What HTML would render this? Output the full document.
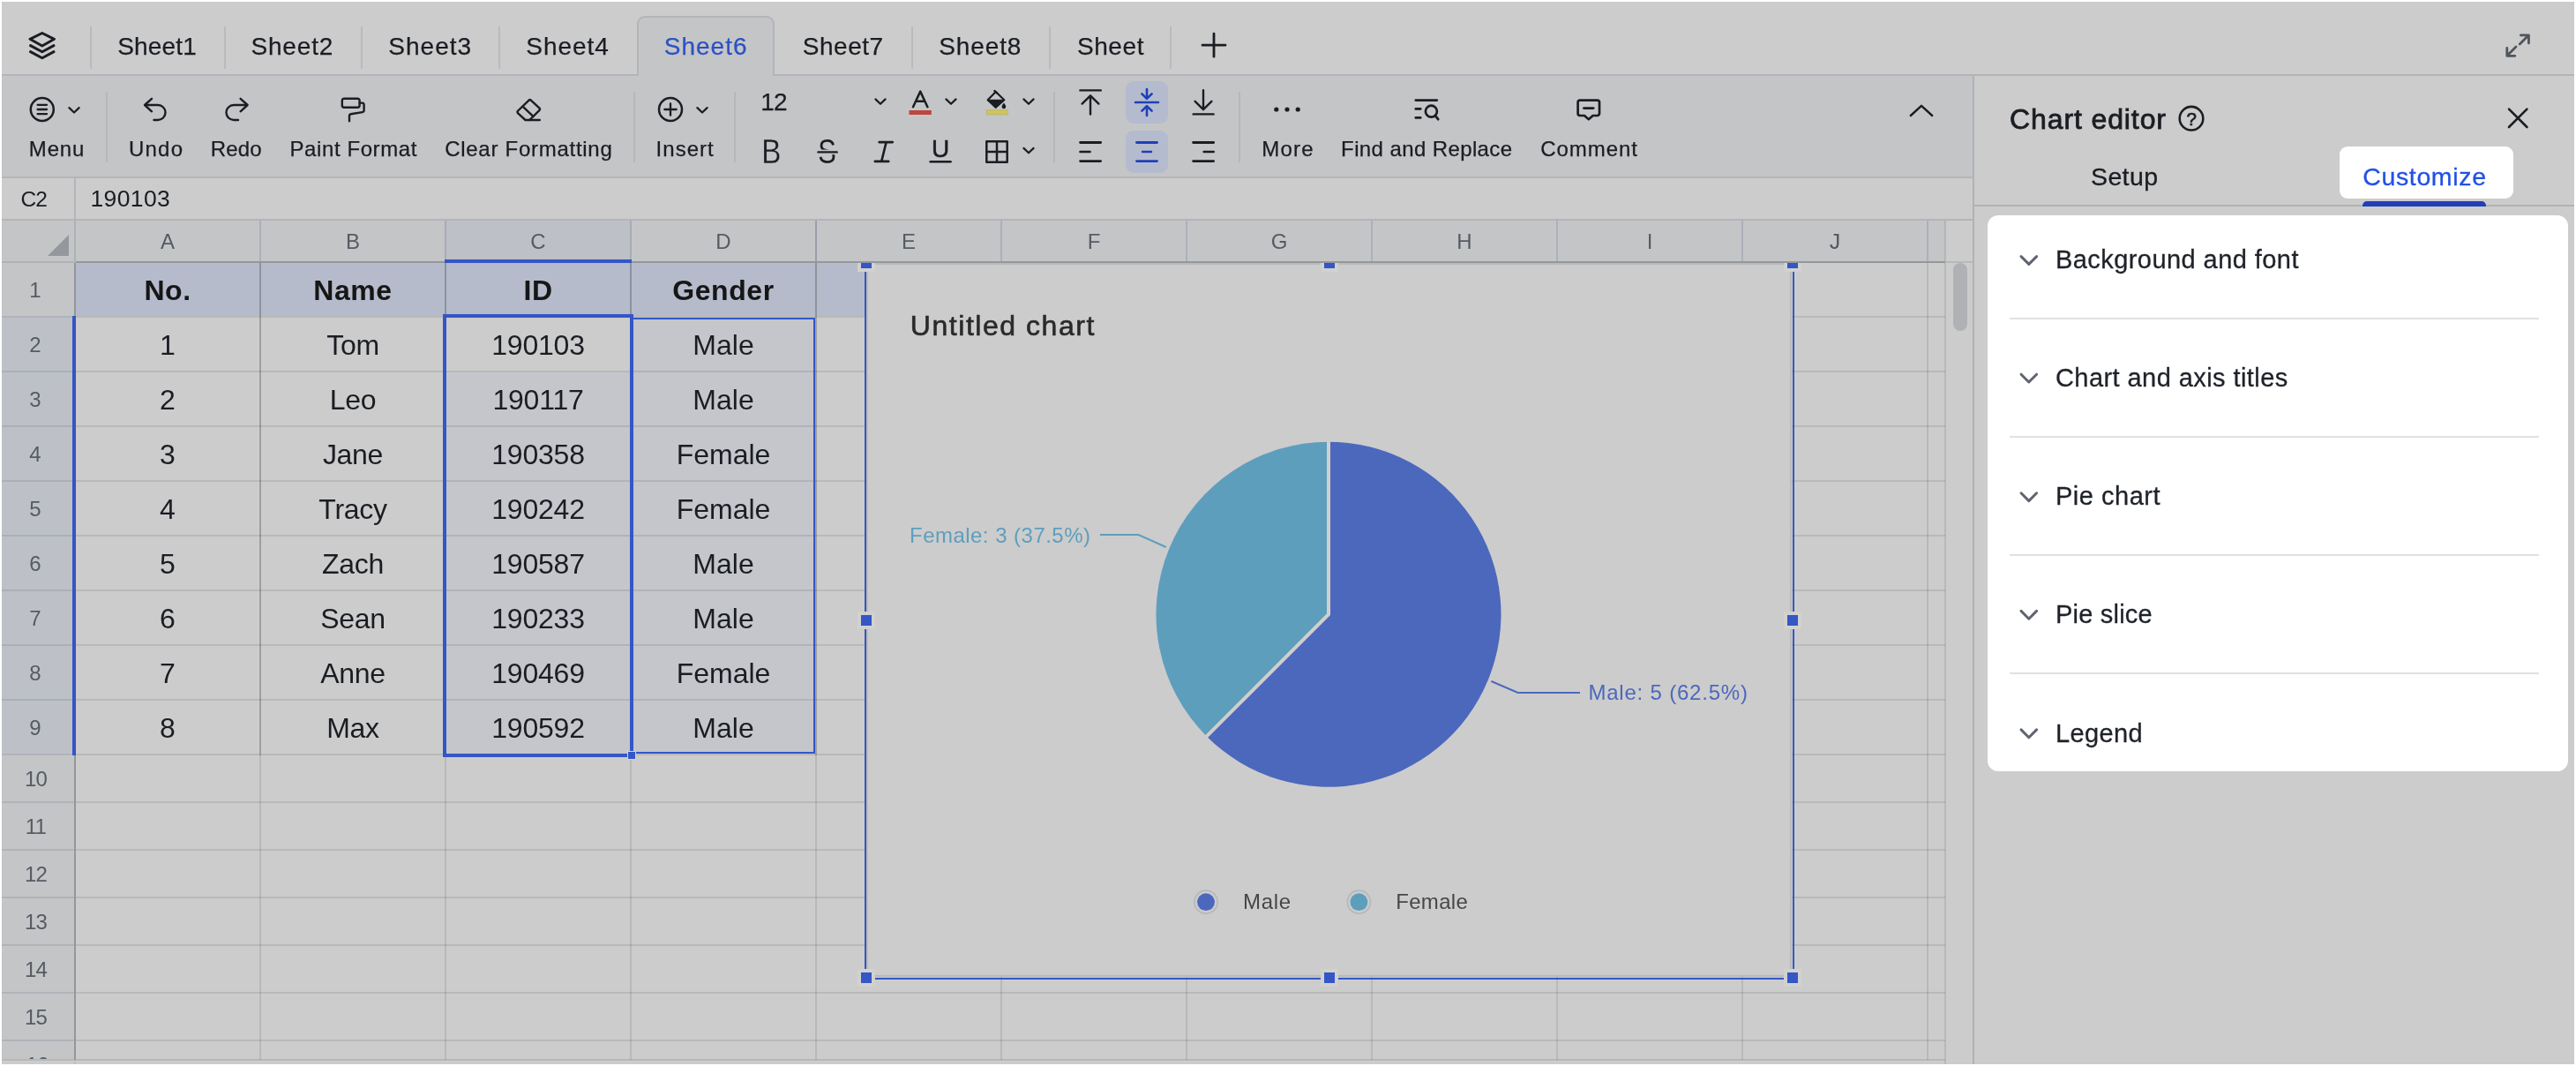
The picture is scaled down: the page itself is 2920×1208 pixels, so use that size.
<!DOCTYPE html>
<html><head><meta charset="utf-8"><title>Sheet</title>
<style>
html,body{margin:0;padding:0;background:#fff;}
body{width:2920px;height:1208px;overflow:hidden;position:relative;font-family:"Liberation Sans",sans-serif;color:#1a1d22;}
#bg{position:absolute;left:2px;top:2px;width:2916px;height:1204px;background:#cccccc;}
#app{position:absolute;left:2px;top:2px;width:2916px;height:1204px;overflow:hidden;will-change:transform;}
#app *{box-sizing:border-box;}
.a{position:absolute;}
.t{position:absolute;white-space:pre;line-height:1;}
.c{position:absolute;white-space:pre;line-height:1;text-align:center;}
svg{position:absolute;overflow:visible;}
.ic{fill:none;stroke:#1a1d22;stroke-width:2.4;stroke-linecap:round;stroke-linejoin:round;}
</style></head><body><div id="bg"></div><div id="app">
<div class="a" style="left:0px;top:82px;width:2916px;height:2px;background:#b4b5b9;"></div><div class="a" style="left:720px;top:16px;width:156px;height:70px;background:#c4c5c7;border:2px solid #b4b5b9;border-bottom:none;border-radius:9px 9px 0 0;"></div><div class="a" style="left:100px;top:28px;width:2px;height:48px;background:#b9babd;"></div><div class="a" style="left:251.5px;top:28px;width:2px;height:48px;background:#b9babd;"></div><div class="a" style="left:407px;top:28px;width:2px;height:48px;background:#b9babd;"></div><div class="a" style="left:563px;top:28px;width:2px;height:48px;background:#b9babd;"></div><div class="a" style="left:1031px;top:28px;width:2px;height:48px;background:#b9babd;"></div><div class="a" style="left:1187px;top:28px;width:2px;height:48px;background:#b9babd;"></div><div class="a" style="left:1324px;top:28px;width:2px;height:48px;background:#b9babd;"></div><div class="t" style="left:131.20px;top:37.30px;font-size:28px;color:#1a1d22;font-weight:400;letter-spacing:0.171px;-webkit-text-stroke-width:0.25px;">Sheet1</div><div class="t" style="left:282.50px;top:37.30px;font-size:28px;color:#1a1d22;font-weight:400;letter-spacing:0.811px;-webkit-text-stroke-width:0.25px;">Sheet2</div><div class="t" style="left:438.30px;top:37.30px;font-size:28px;color:#1a1d22;font-weight:400;letter-spacing:1.011px;-webkit-text-stroke-width:0.25px;">Sheet3</div><div class="t" style="left:594.30px;top:37.30px;font-size:28px;color:#1a1d22;font-weight:400;letter-spacing:0.951px;-webkit-text-stroke-width:0.25px;">Sheet4</div><div class="t" style="left:750.80px;top:37.30px;font-size:28px;color:#2c51c4;font-weight:400;letter-spacing:0.991px;-webkit-text-stroke-width:0.25px;">Sheet6</div><div class="t" style="left:907.70px;top:37.30px;font-size:28px;color:#1a1d22;font-weight:400;letter-spacing:0.551px;-webkit-text-stroke-width:0.25px;">Sheet7</div><div class="t" style="left:1062.30px;top:37.30px;font-size:28px;color:#1a1d22;font-weight:400;letter-spacing:0.871px;-webkit-text-stroke-width:0.25px;">Sheet8</div><div class="t" style="left:1218.90px;top:37.30px;font-size:28px;color:#1a1d22;font-weight:400;letter-spacing:0.606px;-webkit-text-stroke-width:0.25px;">Sheet</div><div class="a" style="left:0px;top:84px;width:2235px;height:114px;background:#c4c5c7;"></div><div class="a" style="left:0px;top:198px;width:2235px;height:2px;background:#b4b5b9;"></div><div class="a" style="left:118px;top:102px;width:2px;height:80px;background:#b6b7ba;"></div><div class="a" style="left:716px;top:102px;width:2px;height:80px;background:#b6b7ba;"></div><div class="a" style="left:830px;top:102px;width:2px;height:80px;background:#b6b7ba;"></div><div class="a" style="left:1192px;top:102px;width:2px;height:80px;background:#b6b7ba;"></div><div class="a" style="left:1402px;top:102px;width:2px;height:80px;background:#b6b7ba;"></div><div class="a" style="left:1274px;top:90px;width:48px;height:48px;background:#b4bbce;border-radius:9px;"></div><div class="a" style="left:1274px;top:146px;width:48px;height:48px;background:#b4bbce;border-radius:9px;"></div><div class="t" style="left:30.80px;top:154.68px;font-size:24px;color:#1a1d22;font-weight:400;letter-spacing:0.854px;-webkit-text-stroke-width:0.25px;">Menu</div><div class="t" style="left:144.00px;top:154.68px;font-size:24px;color:#1a1d22;font-weight:400;letter-spacing:1.208px;-webkit-text-stroke-width:0.25px;">Undo</div><div class="t" style="left:236.80px;top:154.68px;font-size:24px;color:#1a1d22;font-weight:400;letter-spacing:0.174px;-webkit-text-stroke-width:0.25px;">Redo</div><div class="t" style="left:326.50px;top:154.68px;font-size:24px;color:#1a1d22;font-weight:400;letter-spacing:0.592px;-webkit-text-stroke-width:0.25px;">Paint Format</div><div class="t" style="left:502.20px;top:154.68px;font-size:24px;color:#1a1d22;font-weight:400;letter-spacing:0.725px;-webkit-text-stroke-width:0.25px;">Clear Formatting</div><div class="t" style="left:741.60px;top:154.68px;font-size:24px;color:#1a1d22;font-weight:400;letter-spacing:1.035px;-webkit-text-stroke-width:0.25px;">Insert</div><div class="t" style="left:1428.20px;top:154.68px;font-size:24px;color:#1a1d22;font-weight:400;letter-spacing:1.206px;-webkit-text-stroke-width:0.25px;">More</div><div class="t" style="left:1518.10px;top:154.68px;font-size:24px;color:#1a1d22;font-weight:400;letter-spacing:0.392px;-webkit-text-stroke-width:0.25px;">Find and Replace</div><div class="t" style="left:1744.20px;top:154.68px;font-size:24px;color:#1a1d22;font-weight:400;letter-spacing:0.962px;-webkit-text-stroke-width:0.25px;">Comment</div><div class="t" style="left:860.20px;top:100.10px;font-size:28px;color:#1a1d22;font-weight:400;letter-spacing:-0.746px;-webkit-text-stroke-width:0.25px;">12</div><div class="a" style="left:0px;top:246px;width:2235px;height:2px;background:#b4b5b9;"></div><div class="a" style="left:82px;top:200px;width:2px;height:46px;background:#b4b5b9;"></div><div class="t" style="left:21.40px;top:212.26px;font-size:24.5px;color:#1a1d22;font-weight:400;letter-spacing:-0.92px;">C2</div><div class="t" style="left:100.40px;top:210.17px;font-size:26.5px;color:#1a1d22;font-weight:400;letter-spacing:0.394px;">190103</div><svg style="left:0;top:0" width="2916" height="1204" viewBox="2 2 2916 1204"><path d="M47.8,37.5 L61.5,44.3 L47.8,52 L34,44.3 Z" fill="none" stroke="#1a1d22" stroke-width="3.0" stroke-linecap="round" stroke-linejoin="round" stroke-linejoin="miter"/><path d="M34.5,51.6 L47.8,58.8 L61,51.6" fill="none" stroke="#1a1d22" stroke-width="3.0" stroke-linecap="round" stroke-linejoin="round" stroke-linecap="butt" stroke-linejoin="miter"/><path d="M34.5,58.6 L47.8,65.8 L61,58.6" fill="none" stroke="#1a1d22" stroke-width="3.0" stroke-linecap="round" stroke-linejoin="round" stroke-linecap="butt" stroke-linejoin="miter"/><path d="M1363,51.2 H1389 M1376,38.2 V64.2" fill="none" stroke="#1a1d22" stroke-width="2.8" stroke-linecap="round" stroke-linejoin="round" stroke-linecap="butt"/><path d="M2857.4,39.9 H2866.4 V48.9 M2866.2,40.1 L2856.2,50.1" fill="none" stroke="#50555c" stroke-width="2.8" stroke-linecap="round" stroke-linejoin="round" /><path d="M2850.8,63.3 H2841.8 V54.3 M2842,63.1 L2852,53.1" fill="none" stroke="#50555c" stroke-width="2.8" stroke-linecap="round" stroke-linejoin="round" /><circle cx="47.8" cy="124" r="13" fill="none" stroke="#1a1d22" stroke-width="2.5"/><path d="M42.6,118.8 H53 M42.6,124 H53 M42.6,129.2 H53" fill="none" stroke="#1a1d22" stroke-width="2.3" stroke-linecap="round" stroke-linejoin="round" /><path d="M78.4,122.1 L84,127.5 L89.6,122.1" fill="none" stroke="#1a1d22" stroke-width="2.2" stroke-linecap="round" stroke-linejoin="round" /><path d="M172,111.8 L164,119 L172,126.3" fill="none" stroke="#1a1d22" stroke-width="2.4" stroke-linecap="round" stroke-linejoin="round" /><path d="M165,119 H179 a8.5,8.5 0 0 1 0,17 H174.5" fill="none" stroke="#1a1d22" stroke-width="2.4" stroke-linecap="round" stroke-linejoin="round" /><path d="M272.6,111.8 L280.6,119 L272.6,126.3" fill="none" stroke="#1a1d22" stroke-width="2.4" stroke-linecap="round" stroke-linejoin="round" /><path d="M279.6,119 H265 a8.5,8.5 0 0 0 0,17 H270" fill="none" stroke="#1a1d22" stroke-width="2.4" stroke-linecap="round" stroke-linejoin="round" /><path d="M390,111.8 H405.4 a2.2,2.2 0 0 1 2.2,2.2 V119.5 a2.2,2.2 0 0 1 -2.2,2.2 H390 a2.2,2.2 0 0 1 -2.2,-2.2 V114 a2.2,2.2 0 0 1 2.2,-2.2 Z" fill="none" stroke="#1a1d22" stroke-width="2.4" stroke-linecap="round" stroke-linejoin="round" /><path d="M407.6,116.6 H410.4 a2.2,2.2 0 0 1 2.2,2.2 V125 a2.2,2.2 0 0 1 -1.8,2.1 L397.8,129.3 a2.2,2.2 0 0 0 -1.8,2.1 V137.3" fill="none" stroke="#1a1d22" stroke-width="2.4" stroke-linecap="round" stroke-linejoin="round" stroke-linecap="butt"/><path d="M599.3,113.8 a2,2 0 0 1 2.8,0 L611.3,122.3 a2,2 0 0 1 0,2.8 L600.3,136 H595.5 L587.2,128.3 a2,2 0 0 1 0,-2.8 Z" fill="none" stroke="#1a1d22" stroke-width="2.4" stroke-linecap="round" stroke-linejoin="round" /><path d="M592.5,120.6 L604.4,131.9" fill="none" stroke="#1a1d22" stroke-width="2.4" stroke-linecap="round" stroke-linejoin="round" /><path d="M600,136 H611.8" fill="none" stroke="#1a1d22" stroke-width="2.4" stroke-linecap="round" stroke-linejoin="round" /><circle cx="760" cy="124" r="13" fill="none" stroke="#1a1d22" stroke-width="2.5"/><path d="M753.3,124 H766.7 M760,117.3 V130.7" fill="none" stroke="#1a1d22" stroke-width="2.3" stroke-linecap="round" stroke-linejoin="round" /><path d="M790.4,122.1 L796,127.5 L801.6,122.1" fill="none" stroke="#1a1d22" stroke-width="2.2" stroke-linecap="round" stroke-linejoin="round" /><path d="M992.4,112.39999999999999 L998,117.8 L1003.6,112.39999999999999" fill="none" stroke="#1a1d22" stroke-width="2.2" stroke-linecap="round" stroke-linejoin="round" /><path d="M1035,121.2 L1043.2,103.6 L1051.4,121.2 M1038.8,114.7 H1047.6" fill="none" stroke="#1a1d22" stroke-width="2.5" stroke-linecap="round" stroke-linejoin="round" /><rect x="1030.5" y="125" width="25.3" height="5" fill="#bd463e"/><path d="M1072.4,112.39999999999999 L1078,117.8 L1083.6,112.39999999999999" fill="none" stroke="#1a1d22" stroke-width="2.2" stroke-linecap="round" stroke-linejoin="round" /><path d="M1128.7,104 L1138.3,113.2 L1128.7,121.8 L1119.7,113.2 Z" fill="none" stroke="#1a1d22" stroke-width="2.2" stroke-linejoin="round"/><path d="M1120.4,113.6 H1137.6 L1128.7,121.6 Z" fill="#1a1d22" stroke="#1a1d22" stroke-width="1.6" stroke-linejoin="round"/><path d="M1127.3,102.9 L1130.3,105.6" fill="none" stroke="#1a1d22" stroke-width="2.3" stroke-linecap="round" stroke-linejoin="round" /><path d="M1137.9,116.6 c1.6,2.2 2.3,3.3 2.3,4.4 a2.3,2.3 0 0 1 -4.6,0 c0,-1.1 0.7,-2.2 2.3,-4.4 Z" fill="#1a1d22"/><rect x="1118.3" y="124.8" width="24" height="5" fill="#cfc55c" stroke="#bcb35a" stroke-width="0.8"/><path d="M1160.4,112.39999999999999 L1166,117.8 L1171.6,112.39999999999999" fill="none" stroke="#1a1d22" stroke-width="2.2" stroke-linecap="round" stroke-linejoin="round" /><path d="M1118.3,160.3 H1141.7 V183.7 H1118.3 Z M1130,160.3 V183.7 M1118.3,172 H1141.7" fill="none" stroke="#1a1d22" stroke-width="2.5" stroke-linecap="round" stroke-linejoin="round" stroke-linejoin="miter"/><path d="M1160.4,167.9 L1166,173.29999999999998 L1171.6,167.9" fill="none" stroke="#1a1d22" stroke-width="2.2" stroke-linecap="round" stroke-linejoin="round" /><path d="M1224.4,102.4 H1247.8 M1236,129.6 V109 M1226.6,117.6 L1236,108.3 L1245.4,117.6" fill="none" stroke="#1a1d22" stroke-width="2.4" stroke-linecap="round" stroke-linejoin="round" /><path d="M1287,116 H1313 M1300,101 V111.4 M1294.4,106.4 L1300,111.9 L1305.6,106.4 M1300,131 V120.6 M1294.4,125.6 L1300,120.1 L1305.6,125.6" fill="none" stroke="#2040b8" stroke-width="2.6" stroke-linecap="round" stroke-linejoin="round" /><path d="M1352.6,129.4 H1375.6 M1364,102.2 V123.5 M1354.6,114.8 L1364,124.2 L1373.4,114.8" fill="none" stroke="#1a1d22" stroke-width="2.4" stroke-linecap="round" stroke-linejoin="round" /><path d="M1224.6,161.5 H1247.6 M1224.6,182.6 H1247.6" fill="none" stroke="#1a1d22" stroke-width="2.9" stroke-linecap="round" stroke-linejoin="round" /><path d="M1224.4,172 H1235.6" fill="none" stroke="#1a1d22" stroke-width="2.4" stroke-linecap="round" stroke-linejoin="round" /><path d="M1288.5,161.5 H1311.5 M1288.5,182.6 H1311.5" fill="none" stroke="#2040b8" stroke-width="2.9" stroke-linecap="round" stroke-linejoin="round" /><path d="M1295,172 H1305" fill="none" stroke="#2040b8" stroke-width="2.4" stroke-linecap="round" stroke-linejoin="round" /><path d="M1352.6,161.5 H1375.6 M1352.6,182.6 H1375.6" fill="none" stroke="#1a1d22" stroke-width="2.9" stroke-linecap="round" stroke-linejoin="round" /><path d="M1364.6,172 H1375.8" fill="none" stroke="#1a1d22" stroke-width="2.4" stroke-linecap="round" stroke-linejoin="round" /><path d="M996.6,161.1 H1011.8 M991.8,182.9 H1007.2 M1004.6,161.1 L999.2,182.9" fill="none" stroke="#1a1d22" stroke-width="2.6" stroke-linecap="round" stroke-linejoin="round" stroke-linecap="butt"/><path d="M1054.6,183.3 H1077.6" fill="none" stroke="#1a1d22" stroke-width="2.5" stroke-linecap="round" stroke-linejoin="round" /><circle cx="1446.8" cy="124" r="2.6" fill="#1a1d22"/><circle cx="1459" cy="124" r="2.6" fill="#1a1d22"/><circle cx="1471.2" cy="124" r="2.6" fill="#1a1d22"/><path d="M1604.8,113.6 H1628.8 M1604.8,123.4 H1610.2 M1604.8,133.4 H1610.2" fill="none" stroke="#1a1d22" stroke-width="2.8" stroke-linecap="round" stroke-linejoin="round" /><circle cx="1622.4" cy="126.2" r="6.5" fill="none" stroke="#1a1d22" stroke-width="2.7"/><path d="M1627.2,131.4 L1630.2,135.2" fill="none" stroke="#1a1d22" stroke-width="2.8" stroke-linecap="round" stroke-linejoin="round" /><path d="M1791,113.7 H1810.6 a2.4,2.4 0 0 1 2.4,2.4 V128.6 a2.4,2.4 0 0 1 -2.4,2.4 H1805.6 L1800.8,135.2 L1796,131 H1791 a2.4,2.4 0 0 1 -2.4,-2.4 V116.1 a2.4,2.4 0 0 1 2.4,-2.4 Z" fill="none" stroke="#1a1d22" stroke-width="2.7" stroke-linecap="round" stroke-linejoin="round" /><path d="M1795.4,122.6 H1806.2" fill="none" stroke="#1a1d22" stroke-width="2.7" stroke-linecap="round" stroke-linejoin="round" /><path d="M2165.8,131 L2178,119.8 L2190.2,131" fill="none" stroke="#1a1d22" stroke-width="2.4" stroke-linecap="round" stroke-linejoin="round" /><text transform="translate(874.3,185) scale(0.86,1)" font-size="38.6" text-anchor="middle" fill="#1a1d22" stroke="#c4c5c7" stroke-width="0.3" font-family="Liberation Sans, sans-serif">B</text><text transform="translate(937.6,184.7) scale(0.8,1)" font-size="38.6" text-anchor="middle" fill="#1a1d22" font-family="Liberation Sans, sans-serif">S</text><rect x="925" y="169.6" width="26" height="5.6" fill="#c4c5c7"/><path d="M927.5,172.4 H948.7" fill="none" stroke="#1a1d22" stroke-width="2.4" stroke-linecap="round" stroke-linejoin="round" /><text x="1066" y="177.9" font-size="28" text-anchor="middle" fill="#1a1d22" stroke="#1a1d22" stroke-width="0.5" font-family="Liberation Sans, sans-serif">U</text></svg><div class="a" style="left:0px;top:248px;width:2203px;height:47px;background:#c4c5c7;"></div><div class="a" style="left:502px;top:248px;width:212px;height:47px;background:#bdc0c7;"></div><div class="a" style="left:0px;top:296px;width:82px;height:903px;background:#c4c5c7;"></div><div class="a" style="left:0px;top:358px;width:82px;height:494px;background:#bdc0c7;"></div><div class="a" style="left:84px;top:296px;width:894px;height:60px;background:#b5bbcb;"></div><div class="a" style="left:504px;top:420px;width:208px;height:432px;background:#c5c6cc;"></div><div class="a" style="left:716px;top:358px;width:206px;height:494px;background:#c5c6cc;"></div><div class="a" style="left:84px;top:356px;width:2119px;height:2px;background:rgba(10,16,16,0.102);"></div><div class="a" style="left:0px;top:356px;width:82px;height:2px;background:rgba(50,60,95,0.13);"></div><div class="a" style="left:84px;top:418px;width:2119px;height:2px;background:rgba(10,16,16,0.102);"></div><div class="a" style="left:0px;top:418px;width:82px;height:2px;background:rgba(50,60,95,0.13);"></div><div class="a" style="left:84px;top:480px;width:2119px;height:2px;background:rgba(10,16,16,0.102);"></div><div class="a" style="left:0px;top:480px;width:82px;height:2px;background:rgba(50,60,95,0.13);"></div><div class="a" style="left:84px;top:542px;width:2119px;height:2px;background:rgba(10,16,16,0.102);"></div><div class="a" style="left:0px;top:542px;width:82px;height:2px;background:rgba(50,60,95,0.13);"></div><div class="a" style="left:84px;top:604px;width:2119px;height:2px;background:rgba(10,16,16,0.102);"></div><div class="a" style="left:0px;top:604px;width:82px;height:2px;background:rgba(50,60,95,0.13);"></div><div class="a" style="left:84px;top:666px;width:2119px;height:2px;background:rgba(10,16,16,0.102);"></div><div class="a" style="left:0px;top:666px;width:82px;height:2px;background:rgba(50,60,95,0.13);"></div><div class="a" style="left:84px;top:728px;width:2119px;height:2px;background:rgba(10,16,16,0.102);"></div><div class="a" style="left:0px;top:728px;width:82px;height:2px;background:rgba(50,60,95,0.13);"></div><div class="a" style="left:84px;top:790px;width:2119px;height:2px;background:rgba(10,16,16,0.102);"></div><div class="a" style="left:0px;top:790px;width:82px;height:2px;background:rgba(50,60,95,0.13);"></div><div class="a" style="left:84px;top:852px;width:2119px;height:2px;background:rgba(10,16,16,0.102);"></div><div class="a" style="left:0px;top:852px;width:82px;height:2px;background:rgba(50,60,95,0.13);"></div><div class="a" style="left:84px;top:906px;width:2119px;height:2px;background:rgba(10,16,16,0.102);"></div><div class="a" style="left:0px;top:906px;width:82px;height:2px;background:rgba(50,60,95,0.13);"></div><div class="a" style="left:84px;top:960px;width:2119px;height:2px;background:rgba(10,16,16,0.102);"></div><div class="a" style="left:0px;top:960px;width:82px;height:2px;background:rgba(50,60,95,0.13);"></div><div class="a" style="left:84px;top:1014px;width:2119px;height:2px;background:rgba(10,16,16,0.102);"></div><div class="a" style="left:0px;top:1014px;width:82px;height:2px;background:rgba(50,60,95,0.13);"></div><div class="a" style="left:84px;top:1068px;width:2119px;height:2px;background:rgba(10,16,16,0.102);"></div><div class="a" style="left:0px;top:1068px;width:82px;height:2px;background:rgba(50,60,95,0.13);"></div><div class="a" style="left:84px;top:1122px;width:2119px;height:2px;background:rgba(10,16,16,0.102);"></div><div class="a" style="left:0px;top:1122px;width:82px;height:2px;background:rgba(50,60,95,0.13);"></div><div class="a" style="left:84px;top:1176px;width:2119px;height:2px;background:rgba(10,16,16,0.102);"></div><div class="a" style="left:0px;top:1176px;width:82px;height:2px;background:rgba(50,60,95,0.13);"></div><div class="a" style="left:0px;top:1198px;width:2203px;height:2px;background:#b6b8ba;"></div><div class="a" style="left:0px;top:1200px;width:2203px;height:4px;background:#cccccc;"></div><div class="a" style="left:82px;top:1200px;width:2px;height:4px;background:#c0c1c3;"></div><div class="a" style="left:292px;top:296px;width:2px;height:903px;background:rgba(10,16,16,0.102);"></div><div class="a" style="left:292px;top:248px;width:2px;height:46px;background:rgba(50,60,100,0.15);"></div><div class="a" style="left:502px;top:296px;width:2px;height:903px;background:rgba(10,16,16,0.102);"></div><div class="a" style="left:502px;top:248px;width:2px;height:46px;background:rgba(50,60,100,0.15);"></div><div class="a" style="left:712px;top:296px;width:2px;height:903px;background:rgba(10,16,16,0.102);"></div><div class="a" style="left:712px;top:248px;width:2px;height:46px;background:rgba(50,60,100,0.15);"></div><div class="a" style="left:922px;top:296px;width:2px;height:903px;background:rgba(10,16,16,0.102);"></div><div class="a" style="left:922px;top:248px;width:2px;height:46px;background:rgba(50,60,100,0.15);"></div><div class="a" style="left:1132px;top:296px;width:2px;height:903px;background:rgba(10,16,16,0.102);"></div><div class="a" style="left:1132px;top:248px;width:2px;height:46px;background:rgba(50,60,100,0.15);"></div><div class="a" style="left:1342px;top:296px;width:2px;height:903px;background:rgba(10,16,16,0.102);"></div><div class="a" style="left:1342px;top:248px;width:2px;height:46px;background:rgba(50,60,100,0.15);"></div><div class="a" style="left:1552px;top:296px;width:2px;height:903px;background:rgba(10,16,16,0.102);"></div><div class="a" style="left:1552px;top:248px;width:2px;height:46px;background:rgba(50,60,100,0.15);"></div><div class="a" style="left:1762px;top:296px;width:2px;height:903px;background:rgba(10,16,16,0.102);"></div><div class="a" style="left:1762px;top:248px;width:2px;height:46px;background:rgba(50,60,100,0.15);"></div><div class="a" style="left:1972px;top:296px;width:2px;height:903px;background:rgba(10,16,16,0.102);"></div><div class="a" style="left:1972px;top:248px;width:2px;height:46px;background:rgba(50,60,100,0.15);"></div><div class="a" style="left:2182px;top:296px;width:2px;height:903px;background:rgba(10,16,16,0.102);"></div><div class="a" style="left:2182px;top:248px;width:2px;height:46px;background:rgba(50,60,100,0.15);"></div><div class="a" style="left:2202px;top:248px;width:2px;height:956px;background:rgba(10,16,16,0.102);"></div><div class="a" style="left:292px;top:296px;width:2px;height:558px;background:rgba(10,20,10,0.15);"></div><div class="a" style="left:502px;top:296px;width:2px;height:558px;background:rgba(10,20,10,0.15);"></div><div class="a" style="left:712px;top:296px;width:2px;height:558px;background:rgba(10,20,10,0.15);"></div><div class="a" style="left:922px;top:296px;width:2px;height:558px;background:rgba(10,20,10,0.15);"></div><div class="a" style="left:84px;top:294px;width:2119px;height:2px;background:#94989b;"></div><div class="a" style="left:0px;top:294px;width:84px;height:2px;background:#b0b2b6;"></div><div class="a" style="left:82px;top:296px;width:2px;height:903px;background:#93979b;"></div><div class="a" style="left:82px;top:248px;width:2px;height:46px;background:rgba(50,60,100,0.15);"></div><div class="a" style="left:502px;top:292px;width:212px;height:4px;background:#3456c6;"></div><div class="a" style="left:80px;top:356px;width:4px;height:498px;background:#3456c6;"></div><svg style="left:0;top:0" width="100" height="300" viewBox="2 2 100 300"><path d="M78,266 V290 H54 Z" fill="#94989c"/></svg><div class="c" style="left:-12.00px;width:400px;top:259.68px;font-size:24px;color:#565b63;font-weight:400;letter-spacing:0px;">A</div><div class="c" style="left:198.00px;width:400px;top:259.68px;font-size:24px;color:#565b63;font-weight:400;letter-spacing:0px;">B</div><div class="c" style="left:408.00px;width:400px;top:259.68px;font-size:24px;color:#565b63;font-weight:400;letter-spacing:0px;">C</div><div class="c" style="left:618.00px;width:400px;top:259.68px;font-size:24px;color:#565b63;font-weight:400;letter-spacing:0px;">D</div><div class="c" style="left:828.00px;width:400px;top:259.68px;font-size:24px;color:#565b63;font-weight:400;letter-spacing:0px;">E</div><div class="c" style="left:1038.00px;width:400px;top:259.68px;font-size:24px;color:#565b63;font-weight:400;letter-spacing:0px;">F</div><div class="c" style="left:1248.00px;width:400px;top:259.68px;font-size:24px;color:#565b63;font-weight:400;letter-spacing:0px;">G</div><div class="c" style="left:1458.00px;width:400px;top:259.68px;font-size:24px;color:#565b63;font-weight:400;letter-spacing:0px;">H</div><div class="c" style="left:1668.00px;width:400px;top:259.68px;font-size:24px;color:#565b63;font-weight:400;letter-spacing:0px;">I</div><div class="c" style="left:1878.00px;width:400px;top:259.68px;font-size:24px;color:#565b63;font-weight:400;letter-spacing:0px;">J</div><div class="c" style="left:-2.20px;width:80px;top:315.08px;font-size:24px;color:#565b63;font-weight:400;letter-spacing:0px;">1</div><div class="c" style="left:-2.20px;width:80px;top:377.08px;font-size:24px;color:#565b63;font-weight:400;letter-spacing:0px;">2</div><div class="c" style="left:-2.20px;width:80px;top:439.08px;font-size:24px;color:#565b63;font-weight:400;letter-spacing:0px;">3</div><div class="c" style="left:-2.20px;width:80px;top:501.08px;font-size:24px;color:#565b63;font-weight:400;letter-spacing:0px;">4</div><div class="c" style="left:-2.20px;width:80px;top:563.08px;font-size:24px;color:#565b63;font-weight:400;letter-spacing:0px;">5</div><div class="c" style="left:-2.20px;width:80px;top:625.08px;font-size:24px;color:#565b63;font-weight:400;letter-spacing:0px;">6</div><div class="c" style="left:-2.20px;width:80px;top:687.08px;font-size:24px;color:#565b63;font-weight:400;letter-spacing:0px;">7</div><div class="c" style="left:-2.20px;width:80px;top:749.08px;font-size:24px;color:#565b63;font-weight:400;letter-spacing:0px;">8</div><div class="c" style="left:-2.20px;width:80px;top:811.08px;font-size:24px;color:#565b63;font-weight:400;letter-spacing:0px;">9</div><div class="c" style="left:-1.60px;width:80px;top:869.18px;font-size:24px;color:#565b63;font-weight:400;letter-spacing:-0.9px;">10</div><div class="c" style="left:-1.60px;width:80px;top:923.18px;font-size:24px;color:#565b63;font-weight:400;letter-spacing:-0.9px;">11</div><div class="c" style="left:-1.60px;width:80px;top:977.18px;font-size:24px;color:#565b63;font-weight:400;letter-spacing:-0.9px;">12</div><div class="c" style="left:-1.60px;width:80px;top:1031.18px;font-size:24px;color:#565b63;font-weight:400;letter-spacing:-0.9px;">13</div><div class="c" style="left:-1.60px;width:80px;top:1085.18px;font-size:24px;color:#565b63;font-weight:400;letter-spacing:-0.9px;">14</div><div class="c" style="left:-1.60px;width:80px;top:1139.18px;font-size:24px;color:#565b63;font-weight:400;letter-spacing:-0.9px;">15</div><div class="a" style="left:0;top:1178px;width:82px;height:20px;overflow:hidden"><div class="c" style="left:0;width:80px;top:15.18px;font-size:24px;letter-spacing:-0.9px;color:#565b63">16</div></div><div class="c" style="left:-12.00px;width:400px;top:311.31px;font-size:32px;color:#161616;font-weight:700;letter-spacing:0.55px;">No.</div><div class="c" style="left:198.00px;width:400px;top:311.31px;font-size:32px;color:#161616;font-weight:700;letter-spacing:0.55px;">Name</div><div class="c" style="left:408.00px;width:400px;top:311.31px;font-size:32px;color:#161616;font-weight:700;letter-spacing:0.55px;">ID</div><div class="c" style="left:618.00px;width:400px;top:311.31px;font-size:32px;color:#161616;font-weight:700;letter-spacing:0.55px;">Gender</div><div class="c" style="left:-12.00px;width:400px;top:372.61px;font-size:32px;color:#1a1d22;font-weight:400;letter-spacing:0px;">1</div><div class="c" style="left:198.00px;width:400px;top:372.61px;font-size:32px;color:#1a1d22;font-weight:400;letter-spacing:-0.3px;">Tom</div><div class="c" style="left:408.00px;width:400px;top:372.61px;font-size:32px;color:#1a1d22;font-weight:400;letter-spacing:-0.2px;">190103</div><div class="c" style="left:618.00px;width:400px;top:372.61px;font-size:32px;color:#1a1d22;font-weight:400;letter-spacing:0px;">Male</div><div class="c" style="left:-12.00px;width:400px;top:434.61px;font-size:32px;color:#1a1d22;font-weight:400;letter-spacing:0px;">2</div><div class="c" style="left:198.00px;width:400px;top:434.61px;font-size:32px;color:#1a1d22;font-weight:400;letter-spacing:-0.3px;">Leo</div><div class="c" style="left:408.00px;width:400px;top:434.61px;font-size:32px;color:#1a1d22;font-weight:400;letter-spacing:-0.2px;">190117</div><div class="c" style="left:618.00px;width:400px;top:434.61px;font-size:32px;color:#1a1d22;font-weight:400;letter-spacing:0px;">Male</div><div class="c" style="left:-12.00px;width:400px;top:496.61px;font-size:32px;color:#1a1d22;font-weight:400;letter-spacing:0px;">3</div><div class="c" style="left:198.00px;width:400px;top:496.61px;font-size:32px;color:#1a1d22;font-weight:400;letter-spacing:-0.3px;">Jane</div><div class="c" style="left:408.00px;width:400px;top:496.61px;font-size:32px;color:#1a1d22;font-weight:400;letter-spacing:-0.2px;">190358</div><div class="c" style="left:618.00px;width:400px;top:496.61px;font-size:32px;color:#1a1d22;font-weight:400;letter-spacing:0px;">Female</div><div class="c" style="left:-12.00px;width:400px;top:558.61px;font-size:32px;color:#1a1d22;font-weight:400;letter-spacing:0px;">4</div><div class="c" style="left:198.00px;width:400px;top:558.61px;font-size:32px;color:#1a1d22;font-weight:400;letter-spacing:-0.3px;">Tracy</div><div class="c" style="left:408.00px;width:400px;top:558.61px;font-size:32px;color:#1a1d22;font-weight:400;letter-spacing:-0.2px;">190242</div><div class="c" style="left:618.00px;width:400px;top:558.61px;font-size:32px;color:#1a1d22;font-weight:400;letter-spacing:0px;">Female</div><div class="c" style="left:-12.00px;width:400px;top:620.61px;font-size:32px;color:#1a1d22;font-weight:400;letter-spacing:0px;">5</div><div class="c" style="left:198.00px;width:400px;top:620.61px;font-size:32px;color:#1a1d22;font-weight:400;letter-spacing:-0.3px;">Zach</div><div class="c" style="left:408.00px;width:400px;top:620.61px;font-size:32px;color:#1a1d22;font-weight:400;letter-spacing:-0.2px;">190587</div><div class="c" style="left:618.00px;width:400px;top:620.61px;font-size:32px;color:#1a1d22;font-weight:400;letter-spacing:0px;">Male</div><div class="c" style="left:-12.00px;width:400px;top:682.61px;font-size:32px;color:#1a1d22;font-weight:400;letter-spacing:0px;">6</div><div class="c" style="left:198.00px;width:400px;top:682.61px;font-size:32px;color:#1a1d22;font-weight:400;letter-spacing:-0.3px;">Sean</div><div class="c" style="left:408.00px;width:400px;top:682.61px;font-size:32px;color:#1a1d22;font-weight:400;letter-spacing:-0.2px;">190233</div><div class="c" style="left:618.00px;width:400px;top:682.61px;font-size:32px;color:#1a1d22;font-weight:400;letter-spacing:0px;">Male</div><div class="c" style="left:-12.00px;width:400px;top:744.61px;font-size:32px;color:#1a1d22;font-weight:400;letter-spacing:0px;">7</div><div class="c" style="left:198.00px;width:400px;top:744.61px;font-size:32px;color:#1a1d22;font-weight:400;letter-spacing:-0.3px;">Anne</div><div class="c" style="left:408.00px;width:400px;top:744.61px;font-size:32px;color:#1a1d22;font-weight:400;letter-spacing:-0.2px;">190469</div><div class="c" style="left:618.00px;width:400px;top:744.61px;font-size:32px;color:#1a1d22;font-weight:400;letter-spacing:0px;">Female</div><div class="c" style="left:-12.00px;width:400px;top:806.61px;font-size:32px;color:#1a1d22;font-weight:400;letter-spacing:0px;">8</div><div class="c" style="left:198.00px;width:400px;top:806.61px;font-size:32px;color:#1a1d22;font-weight:400;letter-spacing:-0.3px;">Max</div><div class="c" style="left:408.00px;width:400px;top:806.61px;font-size:32px;color:#1a1d22;font-weight:400;letter-spacing:-0.2px;">190592</div><div class="c" style="left:618.00px;width:400px;top:806.61px;font-size:32px;color:#1a1d22;font-weight:400;letter-spacing:0px;">Male</div><div class="a" style="left:714px;top:358px;width:208px;height:494px;border:2px solid #3456c6;"></div><div class="a" style="left:500px;top:354px;width:216px;height:502px;border:4px solid #3456c6;"></div><div class="a" style="left:709px;top:849px;width:10px;height:10px;background:#3456c6;border:1px solid #d4d4d4;"></div><div class="a" style="left:2204px;top:294px;width:30px;height:2px;background:rgba(10,16,16,0.102);"></div><div class="a" style="left:2212px;top:296px;width:16px;height:76.5px;background:#b0b1b5;border-radius:8px;"></div><div class="a" style="left:980px;top:296px;width:1049px;height:809px;background:#cccccc;border:2px solid #b9babb;"></div><div class="a" style="left:978px;top:296px;width:1054px;height:812px;border:2px solid #3456c6;border-top-color:transparent;"></div><svg style="left:0;top:0" width="2916" height="1204" viewBox="2 2 2916 1204"><path d="M1506,696.2 L1506.00,500.70 A195.5,195.5 0 1 1 1367.76,834.44 Z" fill="#4c68bd"/><path d="M1506,696.2 L1367.76,834.44 A195.5,195.5 0 0 1 1506.00,500.70 Z" fill="#5e9ebd"/><path d="M1506.00,499.70 L1506,696.2 L1367.06,835.14" fill="none" stroke="#d0cfcd" stroke-width="4" stroke-linejoin="miter"/><path d="M1321.8,620 L1290.5,606 H1247" fill="none" stroke="#5e9ebd" stroke-width="2"/><path d="M1690.4,772 L1720.6,785 H1791" fill="none" stroke="#4c68bd" stroke-width="2"/><circle cx="1367" cy="1022.2" r="13.1" fill="none" stroke="#b5b7bd" stroke-width="1.7"/><circle cx="1367" cy="1022.2" r="9.9" fill="#4c68bd"/><circle cx="1540.4" cy="1022.2" r="13.1" fill="none" stroke="#b5b7bd" stroke-width="1.7"/><circle cx="1540.4" cy="1022.2" r="9.9" fill="#5e9ebd"/></svg><div class="t" style="left:1029.80px;top:350.91px;font-size:32px;color:#2a2a2a;font-weight:400;letter-spacing:1.543px;-webkit-text-stroke:0.6px #2a2a2a;">Untitled chart</div><div class="t" style="left:1029.00px;top:592.98px;font-size:24px;color:#5e9ebd;font-weight:400;letter-spacing:0.474px;">Female: 3 (37.5%)</div><div class="t" style="left:1798.40px;top:770.88px;font-size:24px;color:#4c68bd;font-weight:400;letter-spacing:0.799px;">Male: 5 (62.5%)</div><div class="t" style="left:1407.00px;top:1007.98px;font-size:24px;color:#474747;font-weight:400;letter-spacing:0.659px;">Male</div><div class="t" style="left:1580.20px;top:1007.98px;font-size:24px;color:#474747;font-weight:400;letter-spacing:0.314px;">Female</div><div class="a" style="left:970px;top:286px;width:20px;height:20px;background:#3456c6;border:4px solid #d1d1cf;"></div><div class="a" style="left:1495px;top:286px;width:20px;height:20px;background:#3456c6;border:4px solid #d1d1cf;"></div><div class="a" style="left:2020px;top:286px;width:20px;height:20px;background:#3456c6;border:4px solid #d1d1cf;"></div><div class="a" style="left:970px;top:691px;width:20px;height:20px;background:#3456c6;border:4px solid #d1d1cf;"></div><div class="a" style="left:2020px;top:691px;width:20px;height:20px;background:#3456c6;border:4px solid #d1d1cf;"></div><div class="a" style="left:970px;top:1096px;width:20px;height:20px;background:#3456c6;border:4px solid #d1d1cf;"></div><div class="a" style="left:1495px;top:1096px;width:20px;height:20px;background:#3456c6;border:4px solid #d1d1cf;"></div><div class="a" style="left:2020px;top:1096px;width:20px;height:20px;background:#3456c6;border:4px solid #d1d1cf;"></div><div class="a" style="left:968px;top:248px;width:1080px;height:47px;background:#c4c5c7;"></div><div class="a" style="left:968px;top:294px;width:1080px;height:2px;background:#94989b;"></div><div class="a" style="left:922px;top:248px;width:2px;height:46px;background:rgba(50,60,100,0.15);"></div><div class="a" style="left:1132px;top:248px;width:2px;height:46px;background:rgba(50,60,100,0.15);"></div><div class="a" style="left:1342px;top:248px;width:2px;height:46px;background:rgba(50,60,100,0.15);"></div><div class="a" style="left:1552px;top:248px;width:2px;height:46px;background:rgba(50,60,100,0.15);"></div><div class="a" style="left:1762px;top:248px;width:2px;height:46px;background:rgba(50,60,100,0.15);"></div><div class="a" style="left:1972px;top:248px;width:2px;height:46px;background:rgba(50,60,100,0.15);"></div><div class="c" style="left:828.00px;width:400px;top:259.68px;font-size:24px;color:#565b63;font-weight:400;letter-spacing:0px;">E</div><div class="c" style="left:1038.00px;width:400px;top:259.68px;font-size:24px;color:#565b63;font-weight:400;letter-spacing:0px;">F</div><div class="c" style="left:1248.00px;width:400px;top:259.68px;font-size:24px;color:#565b63;font-weight:400;letter-spacing:0px;">G</div><div class="c" style="left:1458.00px;width:400px;top:259.68px;font-size:24px;color:#565b63;font-weight:400;letter-spacing:0px;">H</div><div class="c" style="left:1668.00px;width:400px;top:259.68px;font-size:24px;color:#565b63;font-weight:400;letter-spacing:0px;">I</div><div class="c" style="left:1878.00px;width:400px;top:259.68px;font-size:24px;color:#565b63;font-weight:400;letter-spacing:0px;">J</div><div class="a" style="left:2234px;top:84px;width:682px;height:1120px;background:#cccccc;"></div><div class="a" style="left:2234px;top:84px;width:2px;height:1120px;background:#b1b2b5;"></div><div class="a" style="left:2236px;top:230px;width:680px;height:2px;background:#b1b2b4;"></div><div class="t" style="left:2276.00px;top:116.91px;font-size:32px;color:#1a1d22;font-weight:400;letter-spacing:0.892px;-webkit-text-stroke:0.8px #1a1d22;">Chart editor</div><div class="t" style="left:2368.00px;top:184.17px;font-size:28.5px;color:#1a1d22;font-weight:400;letter-spacing:0.38px;-webkit-text-stroke-width:0.3px;">Setup</div><div class="a" style="left:2649.5px;top:163.6px;width:197.5px;height:59.4px;background:#fff;border-radius:9px;"></div><div class="t" style="left:2676.20px;top:184.17px;font-size:28.5px;color:#2250e6;font-weight:400;letter-spacing:0.647px;-webkit-text-stroke-width:0.3px;">Customize</div><div class="a" style="left:2676px;top:226px;width:140px;height:6px;background:#2040b8;border-radius:5px 5px 0 0;"></div><div class="a" style="left:2250.5px;top:241.8px;width:658.5px;height:630px;background:#fff;border-radius:12px;"></div><div class="t" style="left:2328.00px;top:278.25px;font-size:29px;color:#1f2329;font-weight:400;letter-spacing:0.436px;-webkit-text-stroke-width:0.3px;">Background and font</div><div class="t" style="left:2328.00px;top:411.85px;font-size:29px;color:#1f2329;font-weight:400;letter-spacing:0.426px;-webkit-text-stroke-width:0.3px;">Chart and axis titles</div><div class="t" style="left:2328.00px;top:546.45px;font-size:29px;color:#1f2329;font-weight:400;letter-spacing:0.507px;-webkit-text-stroke-width:0.3px;">Pie chart</div><div class="t" style="left:2328.00px;top:680.05px;font-size:29px;color:#1f2329;font-weight:400;letter-spacing:0.214px;-webkit-text-stroke-width:0.3px;">Pie slice</div><div class="t" style="left:2328.00px;top:814.55px;font-size:29px;color:#1f2329;font-weight:400;letter-spacing:0.365px;-webkit-text-stroke-width:0.3px;">Legend</div><div class="a" style="left:2276px;top:357.5px;width:600px;height:2px;background:#dfe1e4;"></div><div class="a" style="left:2276px;top:491.5px;width:600px;height:2px;background:#dfe1e4;"></div><div class="a" style="left:2276px;top:625.6px;width:600px;height:2px;background:#dfe1e4;"></div><div class="a" style="left:2276px;top:760px;width:600px;height:2px;background:#dfe1e4;"></div><svg style="left:0;top:0" width="2916" height="1204" viewBox="2 2 2916 1204"><path d="M2291,290.6 L2299.8,299.40000000000003 L2308.6,290.6" fill="none" stroke="#5f6570" stroke-width="3" stroke-linecap="round" stroke-linejoin="round"/><path d="M2291,424.20000000000005 L2299.8,433.00000000000006 L2308.6,424.20000000000005" fill="none" stroke="#5f6570" stroke-width="3" stroke-linecap="round" stroke-linejoin="round"/><path d="M2291,558.8 L2299.8,567.6 L2308.6,558.8" fill="none" stroke="#5f6570" stroke-width="3" stroke-linecap="round" stroke-linejoin="round"/><path d="M2291,692.3999999999999 L2299.8,701.1999999999999 L2308.6,692.3999999999999" fill="none" stroke="#5f6570" stroke-width="3" stroke-linecap="round" stroke-linejoin="round"/><path d="M2291,826.8999999999999 L2299.8,835.6999999999999 L2308.6,826.8999999999999" fill="none" stroke="#5f6570" stroke-width="3" stroke-linecap="round" stroke-linejoin="round"/><circle cx="2484" cy="134.2" r="13.3" fill="none" stroke="#1a1d22" stroke-width="2.6"/><path d="M2844,123.6 L2864.4,144 M2864.4,123.6 L2844,144" fill="none" stroke="#1a1d22" stroke-width="2.6" stroke-linecap="round"/><text x="2484.2" y="141.5" font-size="20.5" text-anchor="middle" fill="#1a1d22" stroke="#1a1d22" stroke-width="0.7" font-family="Liberation Sans, sans-serif">?</text></svg></div></body></html>
